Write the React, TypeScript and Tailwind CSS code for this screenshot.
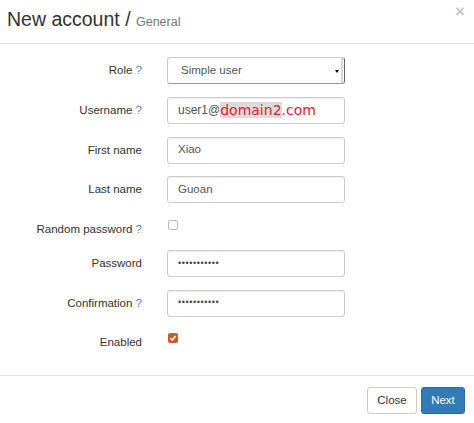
import React from 'react';

const font = { fontFamily: '"Liberation Sans", Arial, sans-serif' };

const Help = () => <span className="text-[#4d87c0]"> ?</span>;

const Row = ({ label, help, h = 'h-[27px]', top = false, children }: { label: string; help?: boolean; h?: string; top?: boolean; children: React.ReactNode }) => (
  <div className={`flex ${h} ${top ? 'items-start' : 'items-center'}`}>
    <div className={`w-[142px] shrink-0 text-right text-[11.5px] leading-[17px] text-[#333] ${top ? 'pt-[5px]' : ''}`}>
      {label}
      {help && <Help />}
    </div>
    <div className="ml-[25px] w-[178px] h-full">{children}</div>
  </div>
);

const TextBox = ({ children }: { children: React.ReactNode }) => (
  <div className="h-full w-full flex items-center rounded-[3px] border border-[#ccc] bg-white pl-[10px] text-[11.5px] text-[#555] shadow-[inset_0_1px_1px_rgba(0,0,0,0.075)]">
    {children}
  </div>
);

const Dots = () => <span className="text-[9px] tracking-[0.6px] text-[#444]">•••••••••••</span>;

export default function App() {
  return (
    <div className="w-[474px] h-[423px] bg-white overflow-hidden" style={font}>
      <div className="h-[44px] border-b border-[#e5e5e5] flex items-start justify-between pl-[7px] pr-[9px]">
        <h4 className="pt-[5px] text-[19.5px] leading-[28px] text-[#333]">
          New account / <span className="text-[12.5px] text-[#777]">General</span>
        </h4>
        <span className="pt-[2px] text-[17px] font-bold leading-[20px] text-[#c8c8c8]">×</span>
      </div>

      <div className="pt-[13px] pb-[25px] flex flex-col gap-[12.75px]">
        <Row label="Role" help>
          <div className="relative h-full w-full flex items-center rounded-[3px] border border-[#ccc] border-r-[#666] border-b-[#999] bg-white pl-[13px] text-[11.5px] text-[#555]">
            Simple user
            <span className="absolute right-[1px] top-0 bottom-0 w-[2px] bg-[#d8d8d8]" />
            <span className="absolute right-[5px] top-[12px] w-0 h-0 border-l-[2.5px] border-r-[2.5px] border-t-[3px] border-l-transparent border-r-transparent border-t-black" />
          </div>
        </Row>
        <Row label="Username" help>
          <TextBox>
            <span className="text-[12px]">user1@</span>
            <span className="text-[14px] leading-[16px] text-[#e3202e] bg-[#dcdcdc]" style={{ fontFamily: '"DejaVu Sans", sans-serif' }}>domain2</span>
            <span className="text-[14px] leading-[16px] text-[#e3202e]" style={{ fontFamily: '"DejaVu Sans", sans-serif' }}>.com</span>
          </TextBox>
        </Row>
        <Row label="First name">
          <TextBox>Xiao</TextBox>
        </Row>
        <Row label="Last name">
          <TextBox>Guoan</TextBox>
        </Row>
        <Row label="Random password" help h="h-[21px]" top>
          <div className="mt-[4px] ml-[1px] w-[10px] h-[10px] rounded-[2px] border border-[#bbb] bg-white" />
        </Row>
        <Row label="Password">
          <TextBox><Dots /></TextBox>
        </Row>
        <Row label="Confirmation" help>
          <TextBox><Dots /></TextBox>
        </Row>
        <Row label="Enabled" h="h-[21px]" top>
          <div className="mt-[4px] ml-[1px] w-[10px] h-[10px] rounded-[2px] bg-[#c5602c] flex items-center justify-center">
            <svg width="8" height="8" viewBox="0 0 8 8">
              <path d="M1.3 4.2 L3.2 6 L6.7 2" stroke="white" strokeWidth="1.5" fill="none" />
            </svg>
          </div>
        </Row>
      </div>

      <div className="border-t border-[#e5e5e5] pt-[11px] pr-[9px] flex justify-end gap-[4px]">
        <button className="h-[27px] w-[50px] rounded-[3px] border border-[#ccc] bg-white text-[11.5px] text-[#333]">Close</button>
        <button className="h-[27px] w-[44px] rounded-[3px] border border-[#2e6da4] bg-[#337ab7] text-[11.5px] text-white">Next</button>
      </div>
    </div>
  );
}
